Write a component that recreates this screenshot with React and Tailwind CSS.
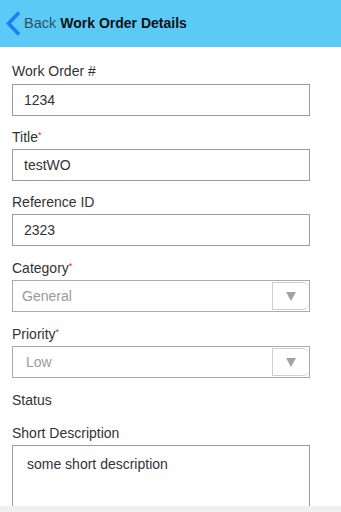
import React from 'react';

const Label = ({ children, required, className = '' }) => (
  <div className={`h-[17px] text-[14px] leading-[17px] text-[#333] ${className}`}>
    {children}
    {required && <span className="relative -top-[4px] text-[9px] text-[#e8201c]">*</span>}
  </div>
);

const TextField = ({ value }) => (
  <div className="flex h-[32px] w-[298px] items-center border border-[#9c9c9c] pl-[11px] text-[14px] text-[#333]">
    {value}
  </div>
);

const SelectField = ({ value, pad = 'pl-[9px]' }) => (
  <div className="flex h-[32px] w-[298px] items-stretch border border-[#ababab] text-[14px] text-[#9a9a9a]">
    <div className={`flex flex-1 items-center ${pad}`}>{value}</div>
    <div className="my-[1px] flex w-[37px] items-center justify-center rounded-r-[6px] border border-r-0 border-[#cfcfcf]">
      <svg width="10" height="9" viewBox="0 0 10 9">
        <path d="M0 0 L10 0 L5 9 Z" fill="#a3a3a3" />
      </svg>
    </div>
  </div>
);

export default function App() {
  return (
    <div className="flex h-[512px] w-[341px] flex-col overflow-hidden bg-white font-['Liberation_Sans',Arial,sans-serif]">
      {/* Header */}
      <div className="flex h-[47px] shrink-0 items-center bg-[#5bcaf6]">
        <svg className="ml-[6px]" width="15" height="25" viewBox="0 0 15 25">
          <path d="M13 1.5 L2.5 12.5 L13 23.5" fill="none" stroke="#1a7ef6" strokeWidth="3.5" />
        </svg>
        <span className="ml-[3px] text-[14.5px] text-[#2f5266]">Back</span>
        <span className="ml-[4px] text-[14px] font-bold text-[#111]">Work Order Details</span>
      </div>

      {/* Form */}
      <div className="flex-1 overflow-hidden pl-[12px] pt-[16px]">
        <Label className="mb-[4px]">Work Order #</Label>
        <TextField value="1234" />

        <Label required className="mb-[3px] mt-[13px]">Title</Label>
        <TextField value="testWO" />

        <Label className="mb-[3px] mt-[13px]">Reference ID</Label>
        <TextField value="2323" />

        <Label required className="mb-[3px] mt-[14px]">Category</Label>
        <SelectField value="General" />

        <Label required className="mb-[3px] mt-[14px]">Priority</Label>
        <SelectField value="Low" pad="pl-[13px]" />

        <Label className="mt-[14px]">Status</Label>

        <Label className="mb-[3px] mt-[16px]">Short Description</Label>
        <div className="h-[80px] w-[298px] border border-[#9c9c9c] pl-[14px] pt-[10px] text-[14px] leading-[17px] text-[#333]">
          some short description
        </div>
      </div>

      <div className="h-[6px] shrink-0 bg-[#efeff4]" />
    </div>
  );
}
